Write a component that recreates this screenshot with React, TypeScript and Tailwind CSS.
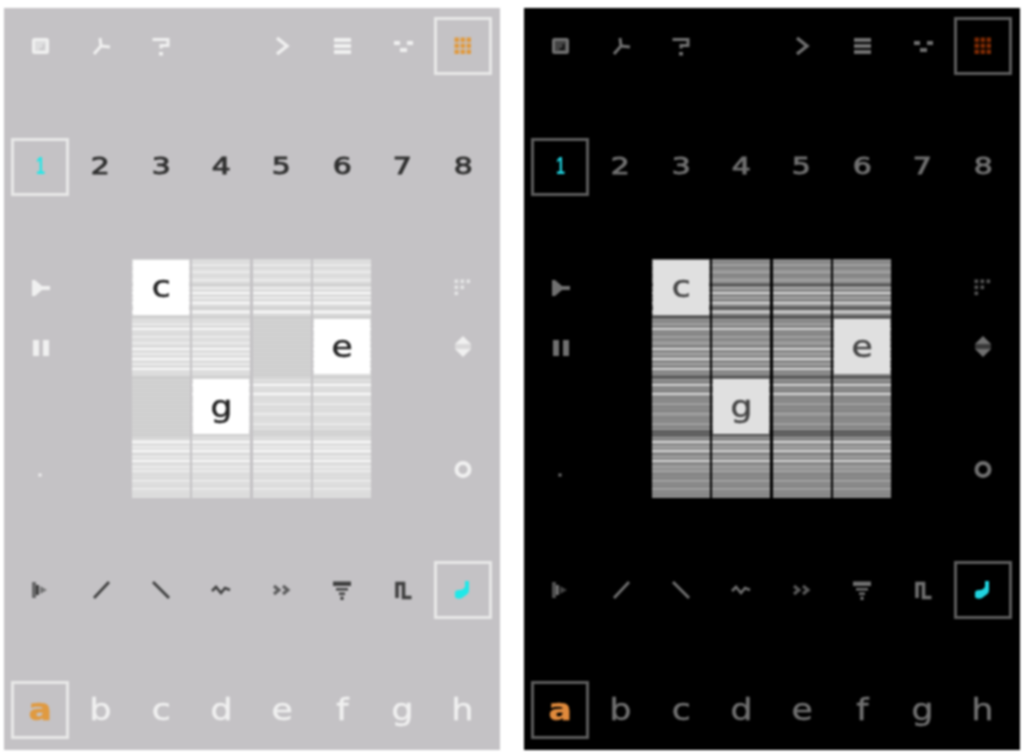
import React from "react";

type Line = [number, "hi" | "lo" | "soft"];

interface Theme {
  panel: string;
  box: string;
  top: string;
  digit: string;
  tool: string;
  letter: string;
  picked: string;
  pickedText: string;
  cut: string;
  dots: string;
  cyan: string;
  orange: string;
  base: string;
  dim: string;
  fine: string;
  hi: string;
  lo: string;
  soft: string;
}

const light: Theme = {
  panel: "bg-[#c4c2c5]",
  box: "border-[#e8e8e8]",
  top: "text-[#f0f0f0]",
  digit: "text-[#303030]",
  tool: "text-[#404040]",
  letter: "text-[#f0f0f0]",
  picked: "bg-white",
  pickedText: "text-[#222222]",
  cut: "stroke-[#c4c2c5]",
  dots: "text-[#e09a40]",
  cyan: "text-[#20e8e8]",
  orange: "text-[#e09a40]",
  base: "#dedede",
  dim: "#d3d3d3",
  fine: "#d8d8d8",
  hi: "#fafafa",
  lo: "#cecece",
  soft: "#ebebeb",
};

const dark: Theme = {
  panel: "bg-black",
  box: "border-[#5c5c5c]",
  top: "text-[#707070]",
  digit: "text-[#707070]",
  tool: "text-[#707070]",
  letter: "text-[#707070]",
  picked: "bg-[#e0e0e0]",
  pickedText: "text-[#444444]",
  cut: "stroke-black",
  dots: "text-[#7c2a04]",
  cyan: "text-[#20d4e0]",
  orange: "text-[#e08a3c]",
  base: "#8c8c8c",
  dim: "#8c8c8c",
  fine: "#7c7c7c",
  hi: "#d8d8d8",
  lo: "#4c4c4c",
  soft: "#a4a4a4",
};

const rowLines: Line[][] = [
  [[5, "soft"], [12, "soft"], [20, "soft"], [25, "lo"], [28, "soft"], [33, "hi"], [38, "soft"], [43, "hi"], [48, "lo"], [52, "hi"], [57, "lo"]],
  [[5, "soft"], [10, "hi"], [18, "soft"], [24, "soft"], [30, "hi"], [35, "soft"], [40, "hi"], [45, "soft"], [50, "hi"], [58, "lo"]],
  [[6, "hi"], [15, "hi"], [25, "soft"], [35, "soft"], [45, "soft"], [53, "lo"], [56, "lo"]],
  [[3, "hi"], [8, "soft"], [12, "hi"], [18, "soft"], [22, "hi"], [28, "soft"], [32, "soft"], [42, "soft"], [50, "soft"]],
];

const picks: Record<string, string> = { "0-0": "c", "1-3": "e", "2-1": "g" };
const dimmed = ["1-2", "2-0"];

const stripes = (t: Theme, row: number, dim: boolean) => {
  const base = dim ? t.dim : t.base;
  const hard = rowLines[row]
    .filter(() => !dim || t === dark)
    .map(([y, kind]) => {
      const c = t[kind];
      return `transparent ${y}px, ${c} ${y}px, ${c} ${y + 2}px, transparent ${y + 2}px`;
    })
    .join(", ");
  const grain = dim && t === light ? "#c9c9c9" : t.fine;
  const fine = `repeating-linear-gradient(to bottom, ${grain} 0, ${grain} 1px, ${base} 1px, ${base} 4px)`;
  return hard ? `linear-gradient(to bottom, ${hard}, transparent 60px), ${fine}` : fine;
};

const Icon = ({ name, t }: { name: string; t: Theme }) => {
  const dotted = [0, 1, 2].flatMap((r) => [0, 1, 2].map((c) => [c, r]));
  return (
    <svg width="24" height="24" viewBox="0 0 24 24" fill="none" stroke="currentColor" strokeWidth="3" className="overflow-visible">
      {name === "square" && (
        <>
          <rect x="5.5" y="5.5" width="14" height="13" rx="1" fill="currentColor" fillOpacity="0.6" strokeWidth="3" />
          <path d="M15.5 10v5h-4" className={t.cut} strokeWidth="1.5" />
        </>
      )}
      {name === "fork" && <path d="M5 20l7-8-1-8M12 12l9 1" />}
      {name === "help" && (
        <>
          <path d="M3.5 5.5h15.5v6H12v3" />
          <rect x="10" y="18" width="4" height="3.5" fill="currentColor" stroke="none" />
        </>
      )}
      {name === "chevron" && <path d="M7 4l10 8-10 8" strokeWidth="3.4" />}
      {name === "bars" && <path d="M4 6h17M4 12h17M4 18h17" strokeWidth="3.8" />}
      {name === "tri" && <path d="M3 9h6M16 9h6M9 16h7" strokeWidth="4" />}
      {name === "dots" &&
        dotted.map(([c, r]) => (
          <rect key={`${c}${r}`} x={3.5 + c * 6} y={3.5 + r * 6} width="4.5" height="4.5" fill="currentColor" stroke="none" />
        ))}
      {name === "play" && <path d="M4 4h3l7 6h8v4h-8l-7 6H4z" fill="currentColor" stroke="none" />}
      {name === "fade" &&
        [[0, 0], [1, 0], [2, 0], [0, 1], [1, 1], [0, 2]].map(([c, r]) => (
          <rect key={`${c}${r}`} x={3.5 + c * 6} y={3.5 + r * 6} width="3.6" height="3.6" fill="currentColor" fillOpacity="0.75" stroke="none" />
        ))}
      {name === "pause" && <path d="M5 4h6v16H5zM15 4h6v16h-6z" fill="currentColor" stroke="none" />}
      {name === "updown" && (
        <>
          <path d="M12 0l8 8H4zM4 13h16l-8 8z" fill="currentColor" stroke="none" />
          <rect x="4" y="8" width="16" height="5" fill="currentColor" fillOpacity="0.5" stroke="none" />
        </>
      )}
      {name === "dot" && <rect x="10.5" y="16.5" width="3" height="3" fill="currentColor" stroke="none" />}
      {name === "ring" && <circle cx="12" cy="12.5" r="6.5" strokeWidth="4" />}
      {name === "hit" && (
        <>
          <rect x="4" y="4" width="4" height="16" fill="currentColor" fillOpacity="0.7" stroke="none" />
          <rect x="8" y="7" width="3" height="10" fill="currentColor" stroke="none" />
          <path d="M12 8l7 4-7 4z" fill="currentColor" fillOpacity="0.6" stroke="none" />
        </>
      )}
      {name === "up" && <path d="M5 20L20 4" strokeWidth="2.8" />}
      {name === "down" && <path d="M4 4l16 16" strokeWidth="2.8" />}
      {name === "wave" && <path d="M3 13l4-4 5 6 4-5 5 2" strokeWidth="2.6" />}
      {name === "skip" && <path d="M4 8l5 4-5 4M13 8l5 4-5 4" strokeWidth="3" strokeOpacity="0.8" />}
      {name === "funnel" && <path d="M3 3.5h18v4.5H3zM6 10h12v2.5H6zM9 14.5h6v2.5H9zM10.5 18.5h3V22h-3z" fill="currentColor" stroke="none" />}
      {name === "step" && <path d="M6 20V5.5h6.5V19.5h8" strokeWidth="3.6" />}
      {name === "note" && (
        <path d="M14 3h4v9c0 2-1 4-3 5l-4 3c-2 1-6 1-7-1v-5c1-2 4-2 6-2 2-1 4-2 4-4z" fill="currentColor" stroke="none" />
      )}
    </svg>
  );
};

const Digit = ({ children, className }: { children: React.ReactNode; className: string }) => (
  <span
    className={`inline-block scale-x-[1.3] font-['DejaVu_Sans',sans-serif] text-[23px] leading-none [-webkit-text-stroke:0.9px_currentColor] ${className}`}
  >
    {children}
  </span>
);

const Letter = ({ children, className }: { children: React.ReactNode; className: string }) => (
  <span
    className={`inline-block scale-x-[1.15] font-['DejaVu_Sans',sans-serif] text-[30px] leading-none [-webkit-text-stroke:0.5px_currentColor] ${className}`}
  >
    {children}
  </span>
);

const Cell = ({ children, box, t }: { children?: React.ReactNode; box?: boolean; t: Theme }) => (
  <div className="flex items-center justify-center">
    <div
      className={`flex h-[58px] w-[58px] items-center justify-center border-[3px] ${box ? t.box : "border-transparent"}`}
    >
      {children}
    </div>
  </div>
);

const Matrix = ({ t }: { t: Theme }) => (
  <div className="col-span-4 row-span-4 m-px grid grid-cols-4 gap-x-[2.4px]">
    {[0, 1, 2, 3].flatMap((r) =>
      [0, 1, 2, 3].map((c) => {
        const key = `${r}-${c}`;
        const pick = picks[key];
        return (
          <div key={key} className="h-[59.7px] px-px pt-px" style={{ background: stripes(t, r, dimmed.includes(key)) }}>
            {pick && (
              <div className={`flex h-[55px] w-full items-center justify-center ${t.picked}`}>
                <Letter className={t.pickedText}>{pick}</Letter>
              </div>
            )}
          </div>
        );
      }),
    )}
  </div>
);

const Panel = ({ t }: { t: Theme }) => (
  <div className={`h-[742px] w-[496px] shrink-0 px-[6px] pt-[8px] blur-[0.8px] ${t.panel}`}>
    <div className="grid grid-cols-[repeat(8,60.4px)] grid-rows-[repeat(12,60.4px)]">
      {/* top toolbar */}
      {["square", "fork", "help", "", "chevron", "bars", "tri"].map((n, i) => (
        <Cell key={i} t={t}>
          {n && (
            <span className={t.top}>
              <Icon name={n} t={t} />
            </span>
          )}
        </Cell>
      ))}
      <Cell box t={t}>
        <span className={t.dots}>
          <Icon name="dots" t={t} />
        </span>
      </Cell>

      <div className="col-span-8" />

      {/* pattern numbers */}
      <Cell box t={t}>
        <span className={`inline-block scale-x-[0.7] font-['Liberation_Sans',sans-serif] text-[23px] font-bold leading-none ${t.cyan}`}>1</span>
      </Cell>
      {["2", "3", "4", "5", "6", "7", "8"].map((n) => (
        <Cell key={n} t={t}>
          <Digit className={t.digit}>{n}</Digit>
        </Cell>
      ))}

      <div className="col-span-8" />

      {/* step matrix with side controls */}
      <Cell t={t}>
        <span className={t.top}>
          <Icon name="play" t={t} />
        </span>
      </Cell>
      <div />
      <Matrix t={t} />
      <div />
      <Cell t={t}>
        <span className={t.top}>
          <Icon name="fade" t={t} />
        </span>
      </Cell>

      <Cell t={t}>
        <span className={t.top}>
          <Icon name="pause" t={t} />
        </span>
      </Cell>
      <div />
      <div />
      <Cell t={t}>
        <span className={t.top}>
          <Icon name="updown" t={t} />
        </span>
      </Cell>

      <div />
      <div />
      <div />
      <div />

      <Cell t={t}>
        <span className={t.top}>
          <Icon name="dot" t={t} />
        </span>
      </Cell>
      <div />
      <div />
      <Cell t={t}>
        <span className={t.top}>
          <Icon name="ring" t={t} />
        </span>
      </Cell>

      <div className="col-span-8" />

      {/* instrument tools */}
      {["hit", "up", "down", "wave", "skip", "funnel", "step"].map((n) => (
        <Cell key={n} t={t}>
          <span className={t.tool}>
            <Icon name={n} t={t} />
          </span>
        </Cell>
      ))}
      <Cell box t={t}>
        <span className={t.cyan}>
          <Icon name="note" t={t} />
        </span>
      </Cell>

      <div className="col-span-8" />

      {/* sound bank letters */}
      <Cell box t={t}>
        <Letter className={`font-bold ${t.orange}`}>a</Letter>
      </Cell>
      {["b", "c", "d", "e", "f", "g", "h"].map((n) => (
        <Cell key={n} t={t}>
          <Letter className={t.letter}>{n}</Letter>
        </Cell>
      ))}
    </div>
  </div>
);

export default function App() {
  return (
    <div className="flex h-[754px] w-[1024px] gap-[24px] overflow-hidden bg-white pl-[4px] pt-[8px]">
      <Panel t={light} />
      <Panel t={dark} />
    </div>
  );
}
